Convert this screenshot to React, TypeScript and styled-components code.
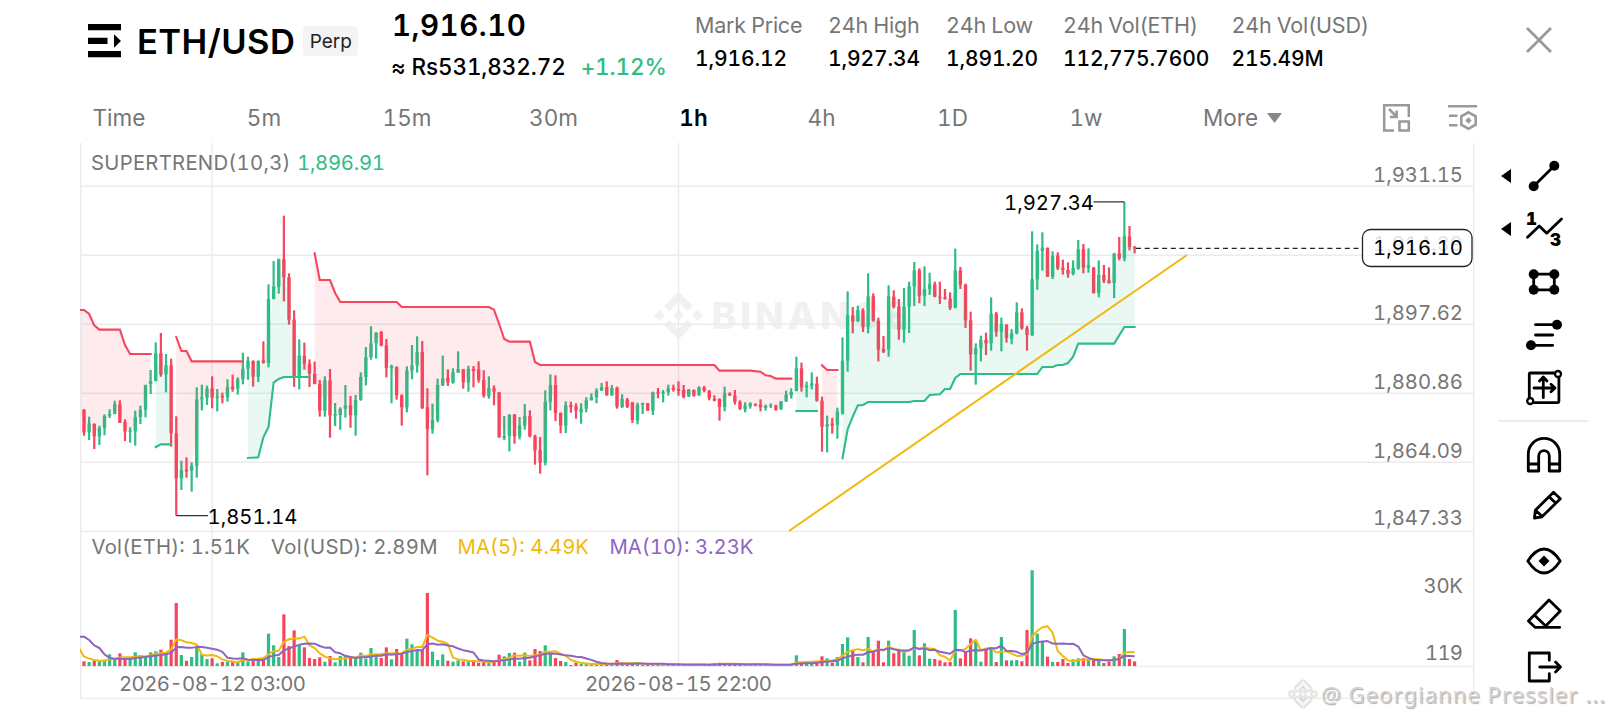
import React from "react";
import styled, { createGlobalStyle } from "styled-components";

const GREEN = "#2ebd85";
const RED = "#f6465d";
const YELLOW = "#f0b90b";
const PURPLE = "#8d65c5";
const GRAY = "#767676";
const LINE = "#ebebeb";

const GlobalStyle = createGlobalStyle`
  * { box-sizing: border-box; }
  body {
    margin: 0;
    background: #fff;
    overflow: hidden;
    font-family: Inter, "Liberation Sans", sans-serif;
    font-variant-numeric: tabular-nums;
    color: #000;
  }
`;

const Page = styled.div`
  position: relative;
  width: 1612px;
  height: 720px;
  background: #fff;
  display: flex;
  flex-direction: column;
  overflow: hidden;
`;

const Header = styled.header`
  height: 92px;
  display: flex;
  padding-left: 87px;
  flex: none;
`;

const Pair = styled.div`
  display: flex;
  align-items: center;
  width: 304px;
  height: 82px;
`;

const Symbol = styled.h1`
  margin: 0 0 0 15px;
  padding-top: 1px;
  font-size: 34.5px;
  line-height: 40px;
  font-weight: 600;
  letter-spacing: 0.45px;
`;

const Tag = styled.span`
  margin-left: 8px;
  width: 55px;
  height: 30px;
  border-radius: 4px;
  background: #f4f4f4;
  color: #222;
  font-size: 19px;
  line-height: 32px;
  text-align: center;
`;

const PriceBlock = styled.div`
  width: 304px;
  padding-top: 7px;
  white-space: nowrap;
`;

const Price = styled.div`
  font-size: 29.5px;
  line-height: 36px;
  font-weight: 600;
  letter-spacing: 0.5px;
  padding-left: 1px;
`;

const Converted = styled.div`
  display: flex;
  gap: 15px;
  margin-top: 9px;
  font-size: 22.5px;
  line-height: 30px;
  font-weight: 500;
  letter-spacing: -0.1px;
`;

const Change = styled.span`
  color: ${GREEN};
`;

const Stat = styled.dl<{ $width: number }>`
  margin: 0;
  padding-top: 11px;
  width: ${(p) => p.$width}px;
  flex: none;
  white-space: nowrap;
`;

const StatLabel = styled.dt`
  font-size: 21.5px;
  line-height: 28px;
  color: ${GRAY};
  letter-spacing: -0.25px;
`;

const StatValue = styled.dd`
  margin: 6px 0 0;
  font-size: 21px;
  line-height: 28px;
  font-weight: 500;
  letter-spacing: -0.1px;
`;

const CloseButton = styled.button`
  margin: 25px 0 0 155px;
  padding: 0;
  border: 0;
  background: none;
  width: 30px;
  height: 30px;
`;

const Tabs = styled.nav`
  height: 51px;
  flex: none;
  display: flex;
  align-items: center;
  padding-left: 46px;
`;

const Tab = styled.span<{ $width: number; $active?: boolean }>`
  width: ${(p) => p.$width}px;
  text-align: center;
  font-size: 22.5px;
  line-height: 30px;
  color: ${(p) => (p.$active ? "#000" : GRAY)};
  font-weight: ${(p) => (p.$active ? 600 : 400)};
`;

const More = styled.span`
  display: flex;
  align-items: center;
  gap: 9px;
  margin-left: 51px;
  width: 178px;
  font-size: 22.5px;
  line-height: 30px;
  color: ${GRAY};
`;

const TabIcon = styled.svg`
  display: block;
  margin-right: 34px;
  flex: none;
`;

const Main = styled.main`
  display: flex;
  flex: 1;
  padding-left: 80px;
`;

const Chart = styled.svg`
  display: block;
  flex: none;
  font-family: Inter, "Liberation Sans", sans-serif;
`;

const Sidebar = styled.aside`
  margin-left: 23px;
  padding-top: 6px;
  width: 91px;
  display: flex;
  flex-direction: column;
`;

const ToolRow = styled.div`
  height: 53px;
  display: flex;
  align-items: center;
  justify-content: flex-end;
  padding-right: 24px;
`;

const Arrow = styled.span`
  margin-right: 12px;
  border: 7.5px solid transparent;
  border-left: 0;
  border-right: 10px solid #000;
`;

const Divider = styled.hr`
  width: 90px;
  height: 2px;
  margin: 6px 0 6px;
  border: 0;
  flex: none;
  background: #ececec;
`;

const Signature = styled.div`
  position: absolute;
  left: 1288px;
  top: 677px;
  display: flex;
  align-items: center;
  gap: 3px;
  white-space: nowrap;
  font: 22px/34px "Noto Sans", sans-serif;
  letter-spacing: 1.05px;
  color: #d2d2d2;
  text-shadow: -1px -1px 0 #fff, 1px 1px 1px #aaa;
`;

const SignatureMark = styled.svg`
  display: block;
  filter: drop-shadow(0.5px 0.5px 1px #888);
`;

const STEP = 5.125;
const FIRST = 84;
const xAt = (i: number) => FIRST + i * STEP;
const yAt = (v: number) => 180 + v / 3;

/* Each candle: direction, high, body top, body bottom, low */
const parse = (shift: number, text: string) =>
  text
    .trim()
    .split(/\s*[;\n]\s*/)
    .filter(Boolean)
    .map((row) => {
      const [d, ...n] = row.split(" ");
      const [high, top, bottom, low] = n.map((v) => Number(v) + shift);
      return { up: d === "g", high, top, bottom, low };
    });

const candles = [
  ...parse(
    0,
    `r 687 690 757 767;g 710 730 757 780;r 730 732 769 807;g 737 744 769 795;g 703 708 744 766;g 688 702 707 714
g 662 673 702 703;r 661 673 728 729;r 718 726 754 783;g 742 751 755 788;g 692 711 754 797;g 677 689 711 732
g 614 616 689 712;g 570 603 612 642;g 487 520 603 604;r 459 520 583 590;g 522 556 583 637;r 536 556 760 800
r 709 760 895 1007;g 842 870 895 930;r 832 869 874 893;g 847 857 872 935;g 622 658 857 893;g 614 652 658 691
g 617 626 653 675;r 589 625 653 685;g 627 650 654 694;r 638 648 652 670;g 598 622 651 665;r 584 620 627 635
g 592 598 626 644;g 518 566 598 613;g 530 542 566 599;r 541 543 590 620;g 541 543 590 606;r 484 541 548 551
g 313 357 549 562;g 243 320 357 358;g 236 238 320 341;r 107 238 292 364;r 280 292 419 434;r 391 419 590 621
g 478 527 591 628;r 488 527 551 569;r 538 551 581 621;r 545 582 612 613`
  ),
  ...parse(
    150,
    `r 450 462 542 560;g 439 451 542 560;r 417 451 557 623;g 519 552 557 588;g 532 537 555 599;g 465 527 537 563
r 498 526 556 593;g 495 510 556 617;g 427 441 510 512;g 351 382 441 466;g 289 340 382 389;g 307 308 340 386
r 303 306 347 349;r 327 346 414 442;g 404 408 415 520;r 409 411 496 509;r 493 496 532 587;g 409 422 532 547
g 345 406 421 448;g 319 367 407 428;r 333 366 534 537;r 475 532 597 736;g 521 571 598 611;g 446 465 571 577
g 377 445 466 468;r 418 444 457 468;g 415 427 458 461;g 364 417 428 428;r 417 418 457 476;g 407 417 457 485
r 408 417 423 472;r 394 418 450 458;r 421 450 497 503;g 439 475 498 506;r 466 475 485 526;r 486 487 622 623
g 558 618 623 630;g 553 554 618 664;r 552 554 619 641;g 561 587 619 628;g 522 558 587 599;r 541 558 619 622
r 614 619 661 704;r 621 661 698 731;g 481 515 698 706;g 433 465 515 541;r 436 465 549 573;r 547 549 586 610
g 514 526 587 609;r 515 525 531 548;r 520 529 541 566`
  ),
  ...parse(
    300,
    `g 370 386 397 431;g 352 361 386 397;g 340 352 360 362;g 325 332 352 370;g 309 322 332 333;r 304 321 346 347
g 315 325 346 347;r 320 323 380 386;g 343 357 381 384;r 354 359 380 384;r 366 367 420 429;g 368 374 421 433
g 368 370 374 402;r 369 370 391 393;g 335 337 392 405;r 324 337 340 355;g 330 337 341 367;g 314 325 337 347
r 314 324 329 335;r 304 327 333 347;r 315 330 351 355;g 327 329 350 351;r 328 330 347 350;g 319 322 346 347
r 318 323 332 337;r 330 334 355 361;r 346 357 362 364;r 355 357 381 422;g 320 340 381 394;r 337 341 346 348
r 330 346 366 374;r 361 366 387 390;g 367 377 388 397;g 367 370 379 386;r 370 373 377 379;r 358 374 382 394
g 374 378 384 392;g 370 376 379 384;r 374 377 390 392;g 363 364 387 390;g 332 344 364 366;g 325 336 346 356
g 230 265 333 334;r 248 265 322 335;g 305 317 322 352;g 277 310 317 328;r 290 311 362 365;r 350 362 440 515
g 407 433 440 517;r 414 431 437 461;g 383 395 434 476;g 172 242 400 404;g 34 106 242 275`
  ),
  ...parse(
    30,
    `r 351 376 395 430;g 347 361 394 395;r 355 361 410 426;g 250 319 410 430;r 310 319 392 395;r 383 392 479 514
r 438 477 485 489;g 286 319 479 500;r 301 320 350 355;r 327 350 419 449;g 294 350 419 458;g 275 289 350 429
g 216 241 289 348;r 235 241 317 340;g 229 297 317 348;g 248 283 297 315;r 275 283 320 322;r 275 320 322 342
r 297 322 327 329;r 307 326 354 360;g 176 241 353 355;r 231 241 284 297;r 281 284 391 414;r 365 391 493 542`
  ),
  ...parse(
    0,
    `g 490 505 523 614;g 467 480 505 544;r 458 480 490 525;g 352 401 490 512;r 396 401 455 470;g 413 432 455 514
r 433 434 474 488;g 447 460 476 493;g 367 397 460 463;r 385 397 445 449;r 437 445 465 512;g 154 298 465 468
g 193 213 298 329;g 157 203 213 272;r 202 204 290 291;g 214 228 290 297;r 217 227 265 270;r 239 263 270 284
r 247 270 281 293;g 241 264 282 286;g 180 208 266 269;r 192 208 263 280;g 205 256 263 278;r 261 263 339 341
g 241 285 339 352;r 255 285 302 309;r 262 301 309 311;g 219 221 309 354;r 171 220 235 241;g 66 169 235 244
r 138 169 200 211;r 198 202 206 220`
  ),
];

/* Supertrend runs as [candle index, level] knots */
const trends: { up: boolean; knots: [number, number][] }[] = [
  { up: false, knots: [[-0.6, 390], [0, 390], [1, 402], [2, 436], [3, 449], [7, 449], [8, 495], [9, 522], [13, 522]] },
  { up: true, knots: [[14, 801], [15, 793], [17, 793]] },
  { up: false, knots: [[18, 471], [19, 513], [20, 513], [21, 544], [31, 544]] },
  { up: true, knots: [[32, 834], [34, 832], [35, 772], [36, 741], [37, 608], [38, 597], [39, 591], [44, 591]] },
  {
    up: false,
    knots: [
      [45, 220], [46, 300], [48, 300], [49, 339], [50, 366], [61, 366], [62, 381], [79, 381], [80, 389], [81, 432],
      [82, 477], [83, 485], [87, 485], [88, 546], [89, 555], [123, 555], [124, 572], [130, 572], [132, 575],
      [133, 586], [134, 588], [135, 596], [138, 596],
    ],
  },
  { up: true, knots: [[139, 693], [143, 693]] },
  { up: false, knots: [[144, 556], [145, 570], [147, 570]] },
  {
    up: true,
    knots: [
      [148, 835], [149, 748], [150, 710], [151, 676], [152, 675], [153, 666], [161, 666], [162, 663], [164, 663],
      [165, 645], [167, 643], [168, 627], [169, 627], [170, 594], [171, 582], [186, 582], [187, 561], [189, 561],
      [190, 555], [191, 555], [192, 549], [193, 530], [194, 491], [201, 491], [203, 441], [205, 441],
    ],
  },
];

const earlierVolumes = [12, 112, 176, 98, 209, 145, 38, 40, 28, 20];
const volumes = `14 12 16 18 19 35 18 38 22 20 41 31 28 41 44 49 38 79 189 33 16 27 58 36 21 23 8 12 12 12 12 41 14 23 20 22
97 62 27 155 60 107 62 56 24 21 26 13 30 11 30 32 30 26 40 22 54 36 24 56 20 51 38 82 65 50 50 219 43 18 35 16
13 17 14 15 15 10 12 9 17 34 29 39 40 13 40 17 51 45 62 40 24 15 12 3 10 7 6 4 7 5 7 4 18 7 5 8 8 4 4 4 6 5 4 4 4 3 4 5 4 4 4
8 10 8 4 4 4 4 4 6 3 3 4 4 5 4 6 32 8 10 9 12 29 23 10 27
66 86 47 27 11 87 47 76 11 76 38 46 43 31 108 32 68 22 21 17 11 12 168 23 42 83 76 13 50 53 12 87 17 17 18 14
108 287 97 75 28 12 12 21 9 20 23 24 18 19 19 9 14 29 36 111 21 14`
  .split(/\s+/)
  .map(Number);

const movingAverage = (n: number) => {
  const all = [...earlierVolumes, ...volumes];
  const points: string[] = [];
  for (let i = earlierVolumes.length - 1; i < all.length; i++) {
    const avg = all.slice(i - n + 1, i + 1).reduce((a, b) => a + b, 0) / n;
    points.push(`${xAt(i - earlierVolumes.length)},${666 - avg / 3}`);
  }
  return points.join(" ");
};

const trendArea = (knots: [number, number][]) => {
  const top = knots.map(([i, v]) => `${xAt(i)},${yAt(v)}`);
  const bottom: string[] = [];
  const start = Math.max(0, knots[0][0]);
  for (let i = knots[knots.length - 1][0]; i >= start; i--) {
    const c = candles[i];
    bottom.push(`${xAt(i)},${yAt((c.top + c.bottom) / 2)}`);
  }
  if (knots[0][0] < 0) bottom.push(`${xAt(knots[0][0])},${yAt(700)}`);
  return [...top, ...bottom].join(" ");
};

type LabelProps = { x: number; y: number; w: number; fill?: string; size?: number; weight?: number; children: string };
const Label = ({ x, y, w, fill = GRAY, size = 20.3, weight = 400, children }: LabelProps) => (
  <text x={x} y={y} textLength={w} fill={fill} fontSize={size} fontWeight={weight}>
    {children}
  </text>
);

const BinanceMark = ({ x, y, r, fill }: { x: number; y: number; r: number; fill: string }) => (
  <g transform={`translate(${x} ${y}) scale(${r / 24})`} fill={fill}>
    <path d="M0 -24L14.5 -9.5L9.2 -4.2L0 -13.4L-9.2 -4.2L-14.5 -9.5Z" />
    <path d="M0 24L14.5 9.5L9.2 4.2L0 13.4L-9.2 4.2L-14.5 9.5Z" />
    <path d="M-19 -5.4L-13.6 0L-19 5.4L-24.4 0Z" />
    <path d="M19 -5.4L24.4 0L19 5.4L13.6 0Z" />
    <path d="M0 -5.4L5.4 0L0 5.4L-5.4 0Z" />
  </g>
);

const priceLabels: [string, number][] = [
  ["1,931.15", 181.7],
  ["1,914.39", 250.5],
  ["1,897.62", 319.7],
  ["1,880.86", 388.7],
  ["1,864.09", 458],
  ["1,847.33", 525],
];

const PriceChart = () => (
  <Chart width={1395} height={577} viewBox="80 143 1395 577">
    <BinanceMark x={678.5} y={315.5} r={24} fill="#f1f1f1" />
    <Label x={711.5} y={329} w={196} size={37.5} weight={800} fill="#f1f1f1">BINANCE</Label>
    <g stroke={LINE} strokeWidth={1.4}>
      {[186.3, 255.2, 324.2, 393.2, 462.2, 531.4, 666.4, 698.4].map((y) => (
        <line key={y} x1={80} x2={1474} y1={y} y2={y} />
      ))}
      <line x1={80.7} x2={80.7} y1={143} y2={698} />
      <line x1={212.2} x2={212.2} y1={143} y2={666} />
      <line x1={678.5} x2={678.5} y1={143} y2={666} />
      <line x1={1473.6} x2={1473.6} y1={143} y2={698} />
    </g>
    {candles.map((c, i) => (
      <g key={i} fill={c.up ? GREEN : RED}>
        <rect x={xAt(i) - 1.1} y={yAt(c.high)} width={2.2} height={(c.low - c.high) / 3} />
        <rect x={xAt(i) - 1.7} y={yAt(c.top)} width={3.4} height={Math.max(1, (c.bottom - c.top) / 3)} />
      </g>
    ))}
    {trends.map((t, k) => (
      <g key={k}>
        <polygon points={trendArea(t.knots)} fill={t.up ? GREEN : RED} fillOpacity={0.105} />
        <polyline
          points={t.knots.map(([i, v]) => `${xAt(i)},${yAt(v)}`).join(" ")}
          fill="none"
          stroke={t.up ? GREEN : RED}
          strokeWidth={2.1}
          strokeLinecap="square"
        />
      </g>
    ))}
    <line x1={789} y1={531} x2={1187} y2={255} stroke={YELLOW} strokeWidth={2} />
    {volumes.map((v, i) => (
      <rect key={i} x={xAt(i) - 1.6} y={666 - v / 3} width={3.2} height={v / 3} fill={candles[i]?.up ? GREEN : RED} />
    ))}
    <polyline points={movingAverage(5)} fill="none" stroke={YELLOW} strokeWidth={2} strokeLinejoin="round" />
    <polyline points={movingAverage(10)} fill="none" stroke={PURPLE} strokeWidth={2} strokeLinejoin="round" />

    <Label x={91} y={170} w={199.5}>SUPERTREND(10,3)</Label>
    <Label x={297} y={170} w={88} fill={GREEN}>1,896.91</Label>
    <Label x={91.5} y={553.7} w={158.5}>Vol(ETH): 1.51K</Label>
    <Label x={271} y={553.7} w={166.5}>Vol(USD): 2.89M</Label>
    <Label x={457.5} y={553.7} w={131.5} fill={YELLOW}>MA(5): 4.49K</Label>
    <Label x={609.5} y={553.7} w={144} fill={PURPLE}>MA(10): 3.23K</Label>
    <Label x={119} y={690.5} w={187}>2026-08-12 03:00</Label>
    <Label x={585} y={690.5} w={187}>2026-08-15 22:00</Label>
    {priceLabels.map(([t, y]) => (
      <Label key={t} x={1373} y={y} w={90}>{t}</Label>
    ))}
    <Label x={1423.5} y={592.5} w={39.5}>30K</Label>
    <Label x={1425} y={659.7} w={38}>119</Label>

    <path d="M176.3 515.7H208M1093.5 201.8H1124.5" stroke="#333" strokeWidth={1.3} />
    <Label x={207.5} y={523.7} w={90} fill="#000">1,851.14</Label>
    <Label x={1004} y={209.7} w={90} fill="#000">1,927.34</Label>
    <line x1={1136} y1={248.3} x2={1362} y2={248.3} stroke="#222" strokeWidth={1.3} strokeDasharray="5 3.7" />
    <rect x={1362.5} y={229.5} width={109.5} height={37} rx={8} fill="#fff" fillOpacity={0.8} stroke="#222" strokeWidth={1.3} />
    <Label x={1373} y={255.3} w={90} fill="#000">1,916.10</Label>
  </Chart>
);

const Tool = ({ children, arrow }: { children: React.ReactNode; arrow?: boolean }) => (
  <ToolRow>
    {arrow && <Arrow />}
    <svg width={42} height={42} viewBox="-21 -21 42 42" fill="none" stroke="#000" strokeWidth={2.8} strokeLinecap="round" strokeLinejoin="round">
      {children}
    </svg>
  </ToolRow>
);

const Dot = ({ x, y }: { x: number; y: number }) => <circle cx={x} cy={y} r={5} fill="#000" stroke="none" />;

const tabs: [string, number][] = [
  ["Time", 146],
  ["5m", 144],
  ["15m", 142],
  ["30m", 151],
  ["1h", 129],
  ["4h", 127],
  ["1D", 135],
  ["1w", 132],
];

const stats: [string, string, number][] = [
  ["Mark Price", "1,916.12", 133],
  ["24h High", "1,927.34", 118],
  ["24h Low", "1,891.20", 117],
  ["24h Vol(ETH)", "112,775.7600", 168.5],
  ["24h Vol(USD)", "215.49M", 137],
];

export default function App() {
  return (
    <Page>
      <GlobalStyle />
      <Header>
        <Pair>
          <svg width={35} height={34} viewBox="0 0 35 34">
            <path d="M1 0H34V6.3H1ZM1 13.8H20.5V20H1ZM1 27H34V33.2H1ZM27 10.2L34 17L27 23.8Z" />
          </svg>
          <Symbol>ETH/USD</Symbol>
          <Tag>Perp</Tag>
        </Pair>
        <PriceBlock>
          <Price>1,916.10</Price>
          <Converted>
            <span>≈ Rs531,832.72</span>
            <Change>+1.12%</Change>
          </Converted>
        </PriceBlock>
        {stats.map(([label, value, width]) => (
          <Stat key={label} $width={width}>
            <StatLabel>{label}</StatLabel>
            <StatValue>{value}</StatValue>
          </Stat>
        ))}
        <CloseButton aria-label="Close">
          <svg width={30} height={30} viewBox="0 0 30 30" stroke="#999" strokeWidth={2.8}>
            <path d="M3 3L27 27M27 3L3 27" />
          </svg>
        </CloseButton>
      </Header>

      <Tabs>
        {tabs.map(([t, w]) => (
          <Tab key={t} $width={w} $active={t === "1h"}>{t}</Tab>
        ))}
        <More>
          More
          <svg width={15} height={10} viewBox="0 0 15 10"><path d="M0 0H15L7.5 10Z" fill="#888" /></svg>
        </More>
        <TabIcon width={32} height={32} viewBox="0 0 32 32" fill="none" stroke="#999" strokeWidth={2.5}>
          <path d="M13 28.5H3.2V3.2H27.8V15" />
          <path d="M8 7L15 14M9 15H15.7V8.5" />
          <rect x={18.5} y={19.5} width={9.3} height={9} />
        </TabIcon>
        <TabIcon width={32} height={32} viewBox="0 0 32 32" fill="none" stroke="#999" strokeWidth={2.5}>
          <path d="M1 4.3H30M2 13.8H10.5M2 23.3H10.5M21.5 10.3L28.7 14.3V22.7L21.5 26.9L14.3 22.7V14.3Z" />
          <path d="M21.5 15.2L24.7 18.5L21.5 21.8L18.3 18.5Z" fill="#999" stroke="none" />
        </TabIcon>
      </Tabs>

      <Main>
        <PriceChart />
        <Sidebar>
          <Tool arrow>
            <path d="M-10.3 10.3L10.3 -10.3" />
            <Dot x={-10.3} y={10.3} />
            <Dot x={10.3} y={-10.3} />
          </Tool>
          <Tool arrow>
            <path d="M-16.5 8.3L-4.7 -3L2.7 4.3L17.5 -10" />
            <text x={-18} y={-3.8} fontSize={17} fontWeight={900} fill="#000" stroke="none">1</text>
            <text x={6} y={17.3} fontSize={17} fontWeight={900} fill="#000" stroke="none">3</text>
          </Tool>
          <Tool>
            <rect x={-10.3} y={-7.8} width={20.6} height={15.6} />
            <Dot x={-10.3} y={-7.8} />
            <Dot x={10.3} y={-7.8} />
            <Dot x={-10.3} y={7.8} />
            <Dot x={10.3} y={7.8} />
          </Tool>
          <Tool>
            <path d="M-8.5 -10.3H10M-8.5 0H8.7M-10 10.3H8.7" />
            <Dot x={13} y={-10.3} />
            <Dot x={-13} y={10.3} />
          </Tool>
          <Tool>
            <rect x={-14.7} y={-15} width={29.6} height={29.6} rx={1} />
            <path d="M-0.7 9.7V-10.7M-4.5 -7L-0.7 -11L3 -7M-10 0H10.5M7 -3.8L11 0L7 3.8" />
            <circle cx={14} cy={-14} r={3} fill="#fff" strokeWidth={2.3} />
            <circle cx={-13.8} cy={13} r={3} fill="#fff" strokeWidth={2.3} />
          </Tool>
          <Divider />
          <Tool>
            <path d="M-15.7 16V-1A15.7 15.7 0 0 1 15.7 -1V16H5.3V1A5.3 5.3 0 0 0 -5.3 1V16ZM-15.7 9H-5.3M5.3 9H15.7" />
          </Tool>
          <Tool>
            <path d="M-9.5 10L-8.7 2.3L9.5 -15.7L16.3 -9.2L-2 8.8ZM5 -11.3L11.7 -5M-8 2.8L-2 8.3" />
          </Tool>
          <Tool>
            <path d="M-16.2 0C-11 -8 -5.5 -12 0 -12S11 -8 16.2 0C11 8 5.5 12 0 12S-11 8 -16.2 0Z" />
            <path d="M0 -5.5L5.5 0L0 5.5L-5.5 0Z" fill="#000" stroke="none" />
          </Tool>
          <Tool>
            <path d="M5 -14L16.3 -3L1.7 12L-9.7 1ZM-9.7 1L-15.6 7L-9 13.3H15.7" />
          </Tool>
          <Tool>
            <path d="M5.3 -6.7V-14H-14.7V14H5.3V6.7M-4.3 0H16M11.5 -5L16.5 0L11.5 5" />
          </Tool>
        </Sidebar>
      </Main>

      <Signature>
        <SignatureMark width={30} height={32} viewBox="-15 -16 30 32">
          <BinanceMark x={0} y={0} r={14} fill="#f4f4f4" />
        </SignatureMark>
        @ Georgianne Pressler ...
      </Signature>
    </Page>
  );
}
